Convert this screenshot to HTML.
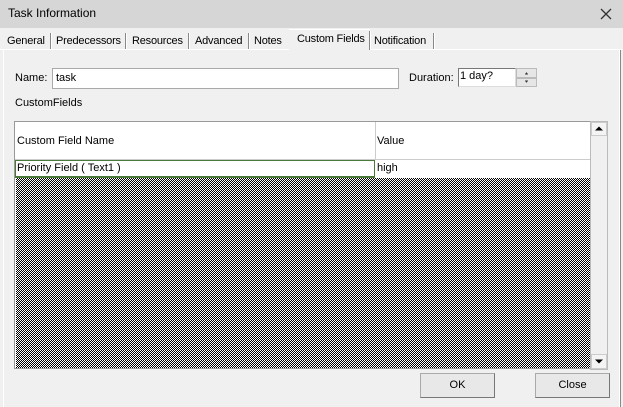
<!DOCTYPE html>
<html><head><style>
*{margin:0;padding:0;box-sizing:border-box}
body{width:623px;height:407px;background:#f0f0f0;font-family:"Liberation Sans",Tahoma,sans-serif;font-size:11px;color:#000;position:relative;overflow:hidden}
.a{position:absolute}
.title{left:0;top:0;width:623px;height:28px;background:#d6d6d6;}
.title span{position:absolute;left:8px;top:6px;font-size:12px}
.tabs{left:0;top:28px;width:623px;height:22px;background:#f0f0f0;border-bottom:1px solid #fff}
.tab{position:absolute;top:35px;font-size:11px;letter-spacing:-0.2px;white-space:nowrap}
.sep{position:absolute;top:33px;width:2px;height:16px;border-left:1px solid #888;border-right:1px solid #fff}
.input{background:#fff;border:1px solid #aaa}
.checker{background-color:#fff;background-image:conic-gradient(#000 25%,#fff 0 50%,#000 0 75%,#fff 0);background-size:2px 2px}
.btn{background:#e8e8e8;border:1px solid #aaa;border-right-color:#777;border-bottom-color:#777;text-align:center;line-height:23px;font-size:11px}
</style></head><body>
<div class="a title"><span>Task Information</span>
<svg class="a" style="left:600px;top:8px" width="12" height="12"><path d="M1 1L11 11M11 1L1 11" stroke="#333" stroke-width="1.3"/></svg></div>
<div class="a tabs"></div>
<div class="tab" style="left:7px">General</div><div class="sep" style="left:50px"></div>
<div class="tab" style="left:56px">Predecessors</div><div class="sep" style="left:125px"></div>
<div class="tab" style="left:132px">Resources</div><div class="sep" style="left:188px"></div>
<div class="tab" style="left:195px">Advanced</div><div class="sep" style="left:248px"></div>
<div class="tab" style="left:254px">Notes</div>
<div class="a" style="left:289px;top:29px;width:81px;height:22px;background:#f0f0f0;border-top:1px solid #fff"></div>
<div class="tab" style="left:297px;top:33px">Custom Fields</div><div class="sep" style="left:369px;top:31px;height:19px"></div>
<div class="tab" style="left:374px">Notification</div><div class="sep" style="left:433px"></div>
<div class="a" style="left:619px;top:50px;width:2px;height:357px;border-left:1px solid #fff;border-right:1px solid #888"></div>
<div class="a" style="left:3px;top:50px;width:1px;height:357px;background:#fff"></div>
<div class="a" style="left:15px;top:72px">Name:</div>
<div class="a input" style="left:52px;top:68px;width:347px;height:21px"></div>
<div class="a" style="left:56px;top:72px">task</div>
<div class="a" style="left:409px;top:72px">Duration:</div>
<div class="a input" style="left:458px;top:68px;width:58px;height:19px;border-color:#777 #ddd #ddd #777"></div>
<div class="a" style="left:460px;top:70px">1 day?</div>
<div class="a" style="left:516px;top:68px;width:21px;height:10px;background:#e6e6e6;border:1px solid #bbb"></div>
<div class="a" style="left:516px;top:78px;width:21px;height:9px;background:#e6e6e6;border:1px solid #bbb"></div>
<svg class="a" style="left:524px;top:71px" width="5" height="14"><path d="M1 3H4M2 2H3M1 10H4M2 11H3" stroke="#333" stroke-width="1"/></svg>
<div class="a" style="left:15px;top:97px">CustomFields</div>
<div class="a" style="left:14px;top:121px;width:577px;height:248px;border:1px solid #999;border-right:none;background:#fff"></div>
<div class="a checker" style="left:16px;top:178px;width:574px;height:190px"></div>
<div class="a" style="left:375px;top:122px;width:1px;height:38px;background:#ccc"></div>
<div class="a" style="left:15px;top:159px;width:575px;height:1px;background:#ccc"></div>
<div class="a" style="left:17px;top:135px">Custom Field Name</div>
<div class="a" style="left:377px;top:135px">Value</div>
<div class="a" style="left:15px;top:160px;width:360px;height:18px;border:1px solid #4a7a3a;border-width:1px 1px 2px 1px"></div>
<div class="a" style="left:17px;top:162px">Priority Field ( Text1 )</div>
<div class="a" style="left:377px;top:162px">high</div>
<div class="a" style="left:590px;top:121px;width:18px;height:249px;background:#f0f0f0;border:1px solid #bbb"></div>
<div class="a" style="left:591px;top:122px;width:16px;height:14px;background:#f4f4f4;border:1px solid #ccc"></div>
<svg class="a" style="left:595px;top:126px" width="8" height="5"><path d="M0 4.5L4 0.5L8 4.5Z" fill="#000"/></svg>
<div class="a" style="left:591px;top:354px;width:16px;height:15px;background:#f4f4f4;border:1px solid #ccc"></div>
<svg class="a" style="left:595px;top:359px" width="8" height="5"><path d="M0 0.5L4 4.5L8 0.5Z" fill="#000"/></svg>
<div class="a btn" style="left:420px;top:373px;width:75px;height:25px">OK</div>
<div class="a btn" style="left:535px;top:373px;width:75px;height:25px">Close</div>
</body></html>
